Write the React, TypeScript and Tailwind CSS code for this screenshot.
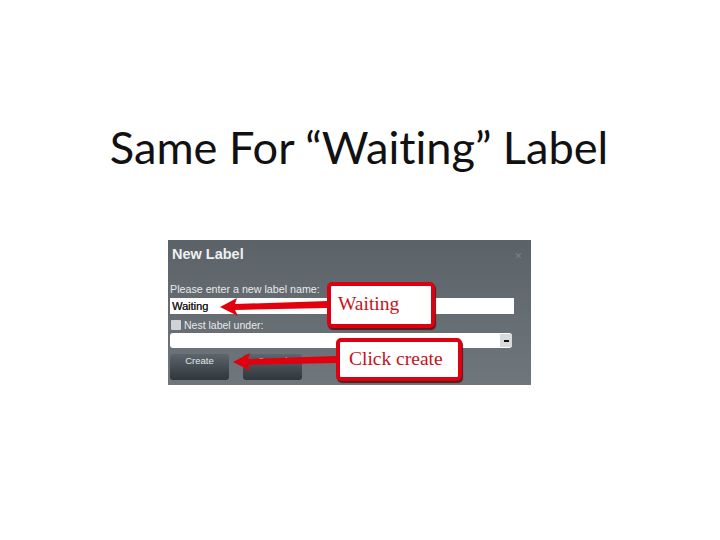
import React from "react";

const Arrow = ({ width, className }: { width: number; className: string }) => (
  <svg
    width={width}
    height="20"
    viewBox={`0 0 ${width} 20`}
    className={`absolute ${className}`}
  >
    <path
      d={`M0 11 L17 2 L15 8 L${width} 5 L${width} 12 L15 14 L18 20 Z`}
      fill="#e2000f"
    />
  </svg>
);

const Callout = ({ text, className }: { text: string; className: string }) => (
  <div
    className={`absolute flex items-center bg-white border-[4px] border-[#dd0010] rounded-[5px] shadow-[1px_2px_1px_#5a1a1a] font-['Liberation_Serif',serif] text-[#c5121c] text-[19.5px] ${className}`}
  >
    {text}
  </div>
);

const DialogButton = ({ label }: { label: string }) => (
  <div className="w-[59px] h-[26px] rounded-[3px] bg-gradient-to-b from-[#5d666d] to-[#2f363c] text-center text-[9.5px] leading-[14px] text-[#e4e6e8]">
    {label}
  </div>
);

export default function App() {
  return (
    <div className="w-[720px] h-[540px] bg-white flex flex-col font-['Liberation_Sans',sans-serif] overflow-hidden">
      <h1 className="mt-[119px] h-[121px] text-center text-[45.2px] leading-[56px] text-[#111] font-['Lato',sans-serif] [font-variant-ligatures:none] pr-[2px]">
        Same For “Waiting” Label
      </h1>
      <div className="relative ml-[168px] w-[363px] h-[145px] bg-gradient-to-b from-[#5b6268] to-[#6f777d] pl-[2px] pr-[17px] pt-[6px] text-[#e8eaec]">
        <div className="text-[14.5px] leading-[17px] font-bold text-[#eef0f1] pl-[2px]">New Label</div>
        <div className="absolute right-[9px] top-[9px] text-[13px] leading-[13px] text-[#7a8288]">×</div>
        <div className="mt-[19px] text-[10.7px] leading-[14px]">Please enter a new label name:</div>
        <div className="mt-[2px] h-[16px] bg-white text-[11px] leading-[16px] text-[#222] pl-[2px] [text-shadow:0.2px_0_0_#222]">Waiting</div>
        <div className="mt-[4px] flex items-center gap-[3px] text-[10.5px] leading-[14px] pl-[1px]">
          <div className="w-[10px] h-[10px] bg-[#d0d3d6] rounded-[1px]" />
          Nest label under:
        </div>
        <div className="mt-[1px] mr-[2px] h-[15px] bg-white rounded-[3px] flex items-center justify-end">
          <div className="w-[12px] h-[13px] bg-[#d8dadc] flex items-center justify-center">
            <div className="w-[5px] h-[2px] bg-[#111]" />
          </div>
        </div>
        <div className="mt-[6px] flex gap-[14px]">
          <DialogButton label="Create" />
          <DialogButton label="Cancel" />
        </div>
        <Arrow width={108} className="left-[52px] top-[56px]" />
        <Arrow width={103} className="left-[65px] top-[111px]" />
        <Callout text="Waiting" className="left-[159px] top-[42px] w-[108px] h-[46px] pl-[7px] pb-[2px]" />
        <Callout text="Click create" className="left-[168px] top-[98px] w-[126px] h-[43px] pl-[9px] pb-[2px]" />
      </div>
    </div>
  );
}
